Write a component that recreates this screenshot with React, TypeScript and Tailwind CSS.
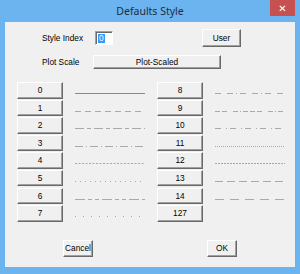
import type { ReactNode } from 'react'

const leftRows: { label: string; dash: string; color?: string }[] = [
  { label: '0', dash: '', color: '#8a8a8a' },
  { label: '1', dash: '6 4' },
  { label: '2', dash: '9 3 4 3' },
  { label: '3', dash: '8 3 1 3' },
  { label: '4', dash: '2 1.5' },
  { label: '5', dash: '1 4' },
  { label: '6', dash: '10 3 4 3 4 3' },
  { label: '7', dash: '1 7' },
]

const rightRows: { label: string; dash: string; color?: string }[] = [
  { label: '8', dash: '6 6 6 3 1 3' },
  { label: '9', dash: '5 2 5 6 5 2 1 2 5 2' },
  { label: '10', dash: '6 5 1 3' },
  { label: '11', dash: '1 1' },
  { label: '12', dash: '2 1' },
  { label: '13', dash: '8 4' },
  { label: '14', dash: '9 6' },
  { label: '127', dash: '', color: 'transparent' },
]

function Btn({ children, className = '' }: { children: ReactNode; className?: string }) {
  return (
    <div
      className={`flex items-center justify-center bg-[#f0f0f0] border border-t-white border-l-white border-r-[#696969] border-b-[#696969] shadow-[inset_-1px_-1px_0_#a0a0a0] text-black leading-none ${className}`}
    >
      {children}
    </div>
  )
}

function LineSample({ dash, color = '#a9a9a9' }: { dash: string; color?: string }) {
  return (
    <svg width="70" height="17.6" className="block shrink-0">
      <line x1="0" y1="11.5" x2="70" y2="11.5" stroke={color} strokeWidth="1" strokeDasharray={dash || undefined} />
    </svg>
  )
}

function StyleColumn({ rows }: { rows: { label: string; dash: string; color?: string }[] }) {
  return (
    <div className="flex flex-col">
      {rows.map((r) => (
        <div key={r.label} className="flex items-start h-[17.6px] gap-[12px]">
          <Btn className="w-[46px] h-[16.5px]">{r.label}</Btn>
          <LineSample dash={r.dash} color={r.color} />
        </div>
      ))}
    </div>
  )
}

export default function App() {
  return (
    <div className="w-[300px] h-[274px] bg-[#6cb4f0] flex flex-col overflow-hidden">
      <div className="h-[22px] relative flex items-center justify-center shrink-0">
        <span className="text-[10.5px] text-[#1f2d3d] font-['Noto_Sans',sans-serif] mt-[1px]">Defaults Style</span>
        <div className="absolute left-[270px] top-0 w-[25px] h-[16px] bg-[#c75050] flex items-center justify-center text-white text-[10px] font-bold font-['DejaVu_Sans',sans-serif]">
          ✕
        </div>
      </div>
      <div className="mx-[5px] mb-[7px] flex-1 bg-[#f0f0f0] flex flex-col font-['Liberation_Sans',Arial,sans-serif] text-[8.3px] text-black">
        <div className="flex items-center h-[18px] mt-[7px]">
          <span className="ml-[37px] w-[53px]">Style Index</span>
          <div className="w-[18px] h-[14px] bg-white border border-t-[#a0a0a0] border-l-[#a0a0a0] border-r-white border-b-white shadow-[inset_1px_1px_0_#696969] flex items-center pl-[2px]">
            <span className="bg-[#3399ff] text-white px-[1px] leading-[9px]">0</span>
          </div>
          <Btn className="ml-[89px] w-[39px] h-[18px]">User</Btn>
        </div>
        <div className="flex items-center h-[14px] mt-[8px]">
          <span className="ml-[37px] w-[51px]">Plot Scale</span>
          <Btn className="w-[128px] h-[14px]">Plot-Scaled</Btn>
        </div>
        <div className="flex mt-[13px] ml-[12px] gap-[12px]">
          <StyleColumn rows={leftRows} />
          <StyleColumn rows={rightRows} />
        </div>
        <div className="flex mt-[17px]">
          <Btn className="ml-[58px] w-[30px] h-[17px]">Cancel</Btn>
          <Btn className="ml-[114px] w-[30px] h-[17px]">OK</Btn>
        </div>
      </div>
    </div>
  )
}
